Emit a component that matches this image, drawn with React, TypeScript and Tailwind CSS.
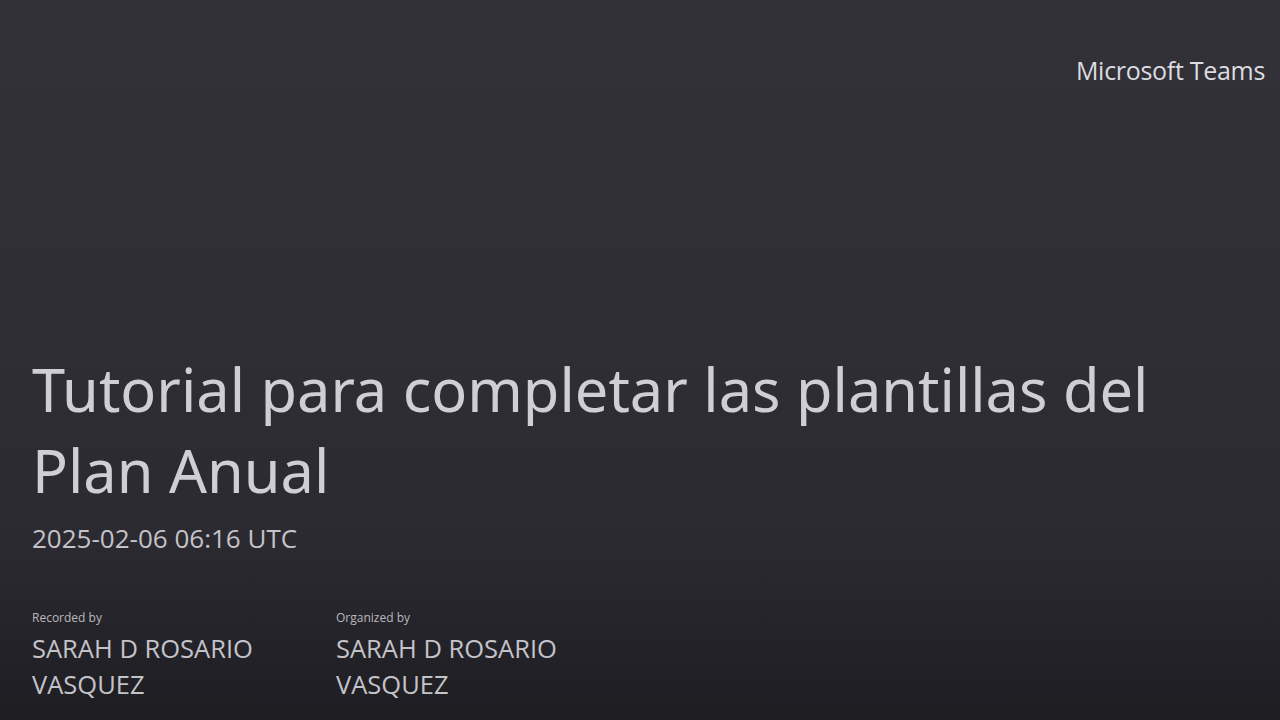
export default function App() {
  return (
    <div
      className="w-[1280px] h-[720px] flex flex-col bg-[linear-gradient(180deg,#323137_0%,#2f2e35_45%,#2b2a31_75%,#1e1d22_100%)] text-[#c9c8ce] overflow-hidden"
      style={{ fontFamily: '"Open Sans", "Noto Sans", sans-serif' }}
    >
      <div className="flex justify-end pt-[52px] pr-[15px]">
        <span className="text-[25px] text-[#dcdce0] tracking-[-0.3px]">Microsoft Teams</span>
      </div>

      <div className="flex-1" />

      <div className="pl-[32px] pb-[18px]">
        <h1
          className="w-[1180px] text-[59.5px] leading-[81px] font-normal text-[#cfced4]"
          style={{ fontFamily: '"Noto Sans", "Open Sans", sans-serif' }}
        >
          Tutorial para completar las plantillas del Plan Anual
        </h1>
        <div className="mt-[12px] text-[26px] leading-[32px] text-[#c4c3c9]">2025-02-06 06:16 UTC</div>

        <div className="mt-[56px] flex">
          <div className="w-[304px]">
            <div className="text-[12px] leading-[16px] text-[#b9b8be]">Recorded by</div>
            <div className="mt-[4px] text-[25.5px] leading-[36px] text-[#c4c3c9]">
              SARAH D ROSARIO
              <br />
              VASQUEZ
            </div>
          </div>
          <div className="w-[304px]">
            <div className="text-[12px] leading-[16px] text-[#b9b8be]">Organized by</div>
            <div className="mt-[4px] text-[25.5px] leading-[36px] text-[#c4c3c9]">
              SARAH D ROSARIO
              <br />
              VASQUEZ
            </div>
          </div>
        </div>
      </div>
    </div>
  );
}
